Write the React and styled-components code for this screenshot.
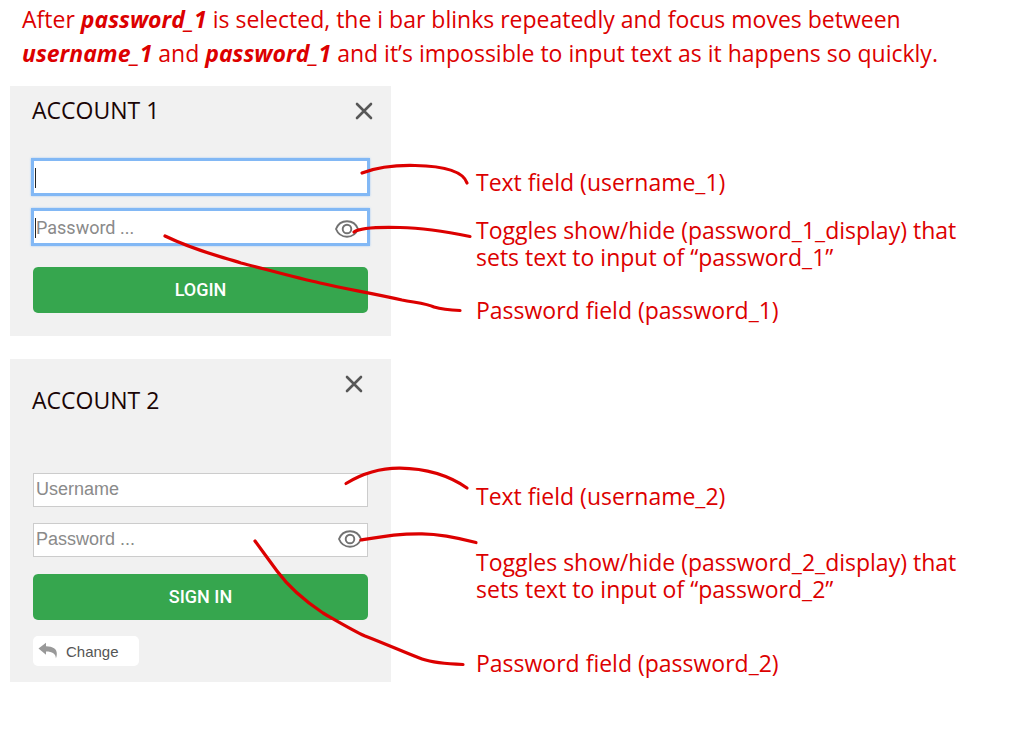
import React, { useState } from 'react';
import styled, { createGlobalStyle, css } from 'styled-components';

const GlobalStyle = createGlobalStyle`
    * {
        box-sizing: border-box;
    }

    body {
        margin: 0;
        background: #fff;
        font-family: 'Open Sans', sans-serif;
    }
`;

const Page = styled.main`
    padding: 2px 10px 56px;
`;

const Intro = styled.p`
    margin: 0 0 16px;
    padding: 0 12px;
    color: #dc0000;
    font-size: 23px;
    font-weight: 400;
    line-height: 34px;

    strong {
        font-weight: 700;
        font-style: italic;
    }
`;

const Example = styled.section`
    position: relative;
    display: flex;
    align-items: flex-start;
    gap: 85px;
    margin-bottom: 23px;
`;

const Card = styled.form`
    flex: 0 0 381px;
    padding: ${props => props.$padding};
    background: #f1f1f1;
`;

const CardHeader = styled.header`
    display: flex;
    align-items: flex-start;
    justify-content: space-between;
    height: ${props => props.$height};
    padding-right: ${props => props.$inset || '0'};
`;

const Title = styled.h2`
    margin: ${props => props.$drop || '0'} 0 0 -1px;
    color: #1a0505;
    font-size: 23px;
    font-weight: 500;
    line-height: 30px;
`;

const IconButton = styled.button`
    display: flex;
    padding: 0;
    border: 0;
    background: none;
    cursor: pointer;
`;

const CloseButton = styled(IconButton)`
    margin: 6px -6px 0 0;
`;

const Field = styled.div`
    position: relative;
    display: flex;
    margin-bottom: 16px;
`;

const Input = styled.input`
    width: 100%;
    height: 34px;
    padding: 0 40px 2px 2px;
    border: 1px solid #ccc;
    border-radius: 0;
    outline: none;
    background: #fff;
    color: #333;
    font-family: ${props => props.$font || "'Liberation Sans', Arial, sans-serif"};
    font-size: 18px;

    &::placeholder {
        color: #8a8a8a;
        opacity: 1;
    }

    ${props => props.$focused && css`
        padding-bottom: 0;
        border-color: #82b8f5;
        box-shadow: 0 0 0 2px #82b8f5, 0 0 2px 2px #a5cbf5;
    `}
`;

const Caret = styled.span`
    position: absolute;
    top: 8px;
    left: 2px;
    width: 1px;
    height: 20px;
    background: #222;
`;

const EyeButton = styled(IconButton)`
    position: absolute;
    top: ${props => props.$top};
    right: ${props => props.$right};
`;

const Submit = styled.button`
    display: block;
    width: 100%;
    height: 46px;
    margin-top: ${props => props.$gap};
    padding: 0 0 2px;
    border: 0;
    border-radius: 5px;
    background: #36a64e;
    color: #fff;
    font-family: Roboto, sans-serif;
    font-size: 18px;
    font-weight: 500;
    cursor: pointer;
`;

const ChangeButton = styled.button`
    display: flex;
    align-items: center;
    gap: 8px;
    height: 30px;
    margin-top: 16px;
    padding: 0 20px 0 5px;
    border: 0;
    border-radius: 5px;
    background: #fff;
    color: #555;
    font-family: 'Liberation Sans', Arial, sans-serif;
    font-size: 15px;
    cursor: pointer;
`;

const Notes = styled.div`
    flex: 1;
    display: flex;
    flex-direction: column;
    padding-top: ${props => props.$top};
`;

const Note = styled.p`
    max-width: 500px;
    margin: 0 0 ${props => props.$gap || '0'};
    color: #dc0000;
    font-size: 23px;
    font-weight: 400;
    line-height: 27px;
`;

// pen strokes from the fields to the notes, drawn over the card
const Strokes = styled.svg`
    position: absolute;
    top: 0;
    left: 0;
    fill: none;
    stroke: #dc0000;
    stroke-width: 3.2;
    stroke-linecap: round;
    stroke-linejoin: round;
    pointer-events: none;
`;

const CloseIcon = () => (
    <svg width="20" height="20" viewBox="0 0 20 20" fill="none" stroke="#575757" strokeWidth="2.6" strokeLinecap="round">
        <path d="M3 3l14 14M17 3L3 17" />
    </svg>
);

const EyeIcon = () => (
    <svg width="24" height="18" viewBox="0 0 24 18" fill="none" stroke="#727272" strokeWidth="1.9">
        <path d="M1 9C3 4 7 1.300 12 1.300S21 4 23 9c-2 5-6 7.700-11 7.700S3 14 1 9z" />
        <circle cx="12" cy="9" r="4.300" />
    </svg>
);

const ReplyIcon = () => (
    <svg width="20" height="18" viewBox="0 0 20 18" fill="#999">
        <path d="M.5 6.500L8 .8v3.400c7 0 11 3 10.800 7.200 0 2-.3 3.400-.9 4.900-.2-4.500-3.400-6.800-9.900-6.800v3.300z" />
    </svg>
);

const Password = ({ id, focused, font, eyeTop, eyeRight }) => {
    const [shown, setShown] = useState(false);

    return (
        <Field>
            <Input
                id={id}
                type={shown ? 'text' : 'password'}
                placeholder="Password ..."
                aria-label="Password"
                $focused={focused}
                $font={font}
            />
            {focused && <Caret />}
            <EyeButton
                type="button"
                aria-label="Show password"
                $top={eyeTop}
                $right={eyeRight}
                onClick={() => setShown(!shown)}
            >
                <EyeIcon />
            </EyeButton>
        </Field>
    );
};

const App = () => (
    <>
        <GlobalStyle />
        <Page>
            <Intro>
                After <strong>password_1</strong> is selected, the i bar blinks repeatedly and focus moves between{' '}
                <strong>username_1</strong> and <strong>password_1</strong> and it’s impossible to input text as it happens so quickly.
            </Intro>

            <Example>
                <Card $padding="9px 23px 23px" onSubmit={e => e.preventDefault()}>
                    <CardHeader $height="65px">
                        <Title>ACCOUNT 1</Title>
                        <CloseButton type="button" aria-label="Close"><CloseIcon /></CloseButton>
                    </CardHeader>
                    <Field>
                        <Input id="username_1" type="text" aria-label="Username" $focused />
                        <Caret />
                    </Field>
                    <Password id="password_1" focused font="Roboto, sans-serif" eyeTop="10px" eyeRight="9px" />
                    <Submit type="submit" $gap="23px">LOGIN</Submit>
                </Card>
                <Notes $top="83px">
                    <Note $gap="21px">Text field (username_1)</Note>
                    <Note $gap="26px">Toggles show/hide (password_1_display) that sets text to input of “password_1”</Note>
                    <Note>Password field (password_1)</Note>
                </Notes>
                <Strokes width="480" height="250" viewBox="0 0 480 250">
                    <path d="M352 87C368 81 384 79 405 79.500C432 80 453 85 457 97" />
                    <path d="M344 146C351 141 372 141 390 141.500C414 142 438 146 460 150.500" />
                    <path d="M155 150C186 165 206 169 231 177C262 185 291 193 310 197C335 203 362 207 392 214C408 217 418 218 424 221C431 223 440 224 450 224.500" />
                </Strokes>
            </Example>

            <Example>
                <Card $padding="9px 23px 16px" onSubmit={e => e.preventDefault()}>
                    <CardHeader $height="105px" $inset="10px">
                        <Title $drop="17px">ACCOUNT 2</Title>
                        <CloseButton type="button" aria-label="Close"><CloseIcon /></CloseButton>
                    </CardHeader>
                    <Field>
                        <Input id="username_2" type="text" placeholder="Username" aria-label="Username" />
                    </Field>
                    <Password id="password_2" eyeTop="7px" eyeRight="6px" />
                    <Submit type="submit" $gap="17px">SIGN IN</Submit>
                    <ChangeButton type="button"><ReplyIcon />Change</ChangeButton>
                </Card>
                <Notes $top="124px">
                    <Note $gap="39px">Text field (username_2)</Note>
                    <Note $gap="47px">Toggles show/hide (password_2_display) that sets text to input of “password_2”</Note>
                    <Note>Password field (password_2)</Note>
                </Notes>
                <Strokes width="480" height="322" viewBox="0 0 480 322">
                    <path d="M336 124.500C355 113 371 109 390 109.200C418 109.500 441 118 457 129" />
                    <path d="M351 181C376 177 391 174.500 412 174.800C432 175 449 179 466 183.500" />
                    <path d="M245 182C253 193 259 201 267 212C278 227 295 242 313 254C327 262 342 271 355 277C376 285 398 295 412 300C424 304 440 305 453 305.500" />
                </Strokes>
            </Example>
        </Page>
    </>
);

export default App;
